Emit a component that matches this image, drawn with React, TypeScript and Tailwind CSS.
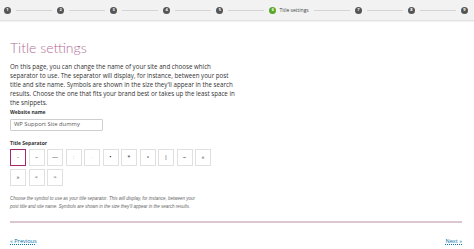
import React from "react";

const seps = ["-", "–", "—", ":", "·", "•", "*", "⋆", "|", "~", "«", "»", "<", ">"];

function Circle({ n, active }: { n: number; active?: boolean }) {
  return (
    <div
      className={
        "w-[7px] h-[7px] rounded-full flex items-center justify-center text-white text-[4px] font-bold leading-none shrink-0 " +
        (active ? "bg-[#5aa727]" : "bg-[#555]")
      }
    >
      {n}
    </div>
  );
}

function Line() {
  return <div className="flex-1 h-px bg-[#d4d4d4] mx-[5px]" />;
}

export default function App() {
  const steps = [1, 2, 3, 4, 5, 6, 7, 8, 9];
  return (
    <div className="w-[474px] h-[249px] bg-white overflow-hidden font-['Open_Sans',sans-serif] text-[#333]">
      <div className="h-[21px] bg-[#f2f2f2] border-b border-[#e2e2e2] shadow-[0_1px_1px_rgba(0,0,0,0.05)] flex items-center pl-[4px] pr-[6px]">
        {steps.map((n, i) => (
          <React.Fragment key={n}>
            {i > 0 && <Line />}
            <div className="flex items-center">
              <Circle n={n} active={n === 6} />
              {n === 6 && <span className="ml-[3px] text-[5px] text-[#444] leading-none whitespace-nowrap">Title settings</span>}
            </div>
          </React.Fragment>
        ))}
      </div>
      <div className="px-[10px]">
        <h1 className="mt-[17px] font-['Lato',sans-serif] text-[14px] font-light leading-[20px] text-[#b06e95]">Title settings</h1>
        <p className="mt-[5px] text-[6.2px] leading-[8.9px] w-[260px] whitespace-nowrap">
          On this page, you can change the name of your site and choose which<br />
          separator to use. The separator will display, for instance, between your post<br />
          title and site name. Symbols are shown in the size they'll appear in the search<br />
          results. Choose the one that fits your brand best or takes up the least space in<br />
          the snippets.
        </p>
        <div className="mt-[0px] text-[5px] font-bold leading-[8px]">Website name</div>
        <div className="mt-[3px] w-[93px] h-[12px] border border-[#cfcfcf] rounded-[1px] flex items-center px-[3px] text-[5.8px] text-[#555]">
          WP Support Site dummy
        </div>
        <div className="mt-[8px] text-[5px] font-bold leading-[8px]">Title Separator</div>
        <div className="mt-[2px] flex flex-wrap gap-x-[2.5px] gap-y-[3px] w-[210px]">
          {seps.map((s, i) => (
            <div
              key={i}
              className={
                "w-[16px] h-[17px] flex items-center justify-center text-[6px] leading-none " +
                (i === 0 ? "border-[1.5px] border-[#a4286a]" : "border border-[#e0e0e0]") +
                (i === 3 || i === 4 ? " text-[#bbb]" : " text-[#333]")
              }
            >
              {s}
            </div>
          ))}
        </div>
        <p className="mt-[9px] font-['Liberation_Sans',sans-serif] text-[4.5px] italic leading-[8px] text-[#666] whitespace-nowrap">
          Choose the symbol to use as your title separator. This will display, for instance, between your<br />
          post title and site name. Symbols are shown in the size they'll appear in the search results.
        </p>
        <div className="mt-[10px] h-[2px] w-[452px] bg-[#dcc6d2]" />
        <div className="mt-[14.5px] flex justify-between w-[452px] text-[5.6px] leading-[9px]">
          <a className="text-[#0073aa] underline decoration-dotted">« Previous</a>
          <a className="text-[#0073aa] underline decoration-dotted">Next »</a>
        </div>
      </div>
    </div>
  );
}
